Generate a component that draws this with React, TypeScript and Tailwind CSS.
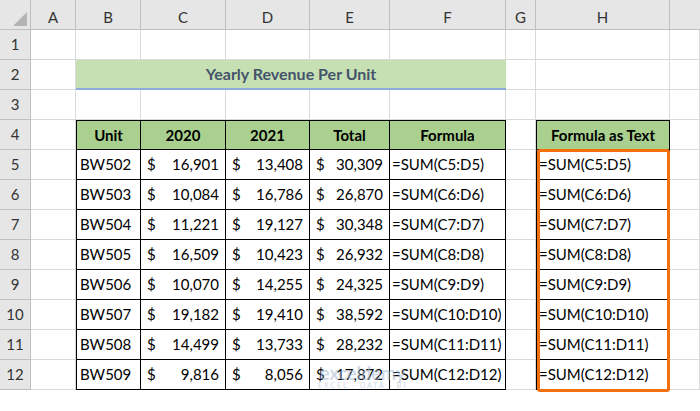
import React from 'react';

const cols = ['A', 'B', 'C', 'D', 'E', 'F', 'G', 'H'];
const widths = '31px 45px 65px 85px 84px 80px 116px 30px 134px 30px';

const data: [string, string, string, string, string][] = [
  ['BW502', '16,901', '13,408', '30,309', 'C5:D5'],
  ['BW503', '10,084', '16,786', '26,870', 'C6:D6'],
  ['BW504', '11,221', '19,127', '30,348', 'C7:D7'],
  ['BW505', '16,509', '10,423', '26,932', 'C8:D8'],
  ['BW506', '10,070', '14,255', '24,325', 'C9:D9'],
  ['BW507', '19,182', '19,410', '38,592', 'C10:D10'],
  ['BW508', '14,499', '13,733', '28,232', 'C11:D11'],
  ['BW509', '9,816', '8,056', '17,872', 'C12:D12'],
];

const grid = 'border-r border-b border-[#d9d9d9]';
const tb = 'border-r border-b border-black';

function Money({ v }: { v: string }) {
  return (
    <div className={`${tb} flex justify-between items-center px-[6px]`}>
      <span>$</span>
      <span>{v}</span>
    </div>
  );
}

export default function App() {
  return (
    <div
      className="w-[700px] h-[411px] bg-white overflow-hidden relative text-[15px] text-black"
      style={{ fontFamily: 'Lato, "Open Sans", sans-serif' }}
    >
      <div className="grid" style={{ gridTemplateColumns: widths, gridTemplateRows: '30px repeat(12, 30px)' }}>
        {/* column header */}
        <div className="bg-[#e6e6e6] border-r border-b border-[#bfbfbf] flex items-end justify-end p-[3px]">
          <div className="w-0 h-0 border-l-[14px] border-l-transparent border-b-[14px] border-b-[#b4b4b4]" />
        </div>
        {cols.map(c => (
          <div key={c} className="bg-[#e6e6e6] border-r border-b border-[#bfbfbf] flex items-center justify-center text-[#333] pt-[6px]">
            {c}
          </div>
        ))}
        <div className="bg-[#e6e6e6] border-b border-[#bfbfbf]" />

        {Array.from({ length: 12 }, (_, i) => {
          const r = i + 1;
          const rh = <div key={'h' + r} className="bg-[#e6e6e6] border-r border-b border-[#bfbfbf] flex items-center justify-center text-[#333]">{r}</div>;
          if (r === 2) {
            return (
              <React.Fragment key={r}>
                {rh}
                <div className={grid} />
                <div className="col-span-5 bg-[#c6e0b4] border-b-[2px] border-[#8ea9db] flex items-center justify-center font-bold text-[#44546a] text-[16px]">
                  Yearly Revenue Per Unit
                </div>
                <div className={grid} /><div className={grid} /><div className={grid} />
              </React.Fragment>
            );
          }
          if (r === 4) {
            return (
              <React.Fragment key={r}>
                {rh}
                <div className={grid} />
                {['Unit', '2020', '2021', 'Total', 'Formula'].map((t, j) => (
                  <div key={t} className={`bg-[#a9d08e] ${tb} border-t flex items-center justify-center font-bold ${j === 0 ? 'border-l' : ''}`}>{t}</div>
                ))}
                <div className={grid} />
                <div className={`bg-[#a9d08e] ${tb} border-t border-l flex items-center justify-center font-bold`}>Formula as Text</div>
                <div className={grid} />
              </React.Fragment>
            );
          }
          if (r >= 5) {
            const d = data[r - 5];
            return (
              <React.Fragment key={r}>
                {rh}
                <div className={grid} />
                <div className={`${tb} border-l flex items-center px-[3px]`}>{d[0]}</div>
                <Money v={d[1]} />
                <Money v={d[2]} />
                <Money v={d[3]} />
                <div className={`${tb} flex items-center px-[2px]`}>=SUM({d[4]})</div>
                <div className={grid} />
                <div className={`${tb} border-l flex items-center px-[2px]`}>=SUM({d[4]})</div>
                <div className={grid} />
              </React.Fragment>
            );
          }
          return (
            <React.Fragment key={r}>
              {rh}
              {Array.from({ length: 9 }, (_, j) => <div key={j} className={grid} />)}
            </React.Fragment>
          );
        })}
      </div>
      <div className="absolute left-[537px] top-[149px] w-[133px] h-[243px] border-[3px] border-[#f4700f] rounded-[3px] pointer-events-none" />
      <div className="absolute left-[320px] top-[364px] text-[#9db4d0] opacity-50 text-[18px] font-bold leading-none">exceldemy</div>
      <div className="absolute left-[318px] top-[382px] text-[#9db4d0] opacity-50 text-[7px] tracking-[2px] leading-none">EXCEL · DATA · BI</div>
    </div>
  );
}
